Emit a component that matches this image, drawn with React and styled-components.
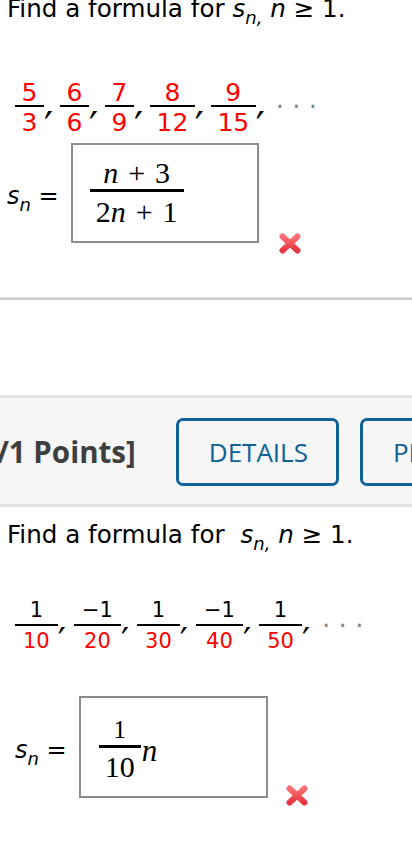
import React from "react";
import styled, { createGlobalStyle } from "styled-components";

const Global = createGlobalStyle`
  html, body { margin: 0; padding: 0; background: #fff; }
  body { font-family: "DejaVu Sans", Verdana, sans-serif; color: #000; }
`;

const Page = styled.div`
  width: 412px;
  overflow: hidden;
  padding-bottom: 30px;
`;

const Section = styled.section`
  padding-left: 7px;
`;

const Prompt = styled.p`
  margin: ${(p) => p.$mt}px 0 0;
  font-size: 24.6px;
  line-height: 28px;
  white-space: nowrap;
`;

const Var = styled.i`
  font-style: italic;
  margin-left: ${(p) => p.$ml || 0}px;
`;

const Sub = styled.span`
  font-style: italic;
  font-size: 18px;
  vertical-align: -7px;
  line-height: 0;
`;

const SeqRow = styled.div`
  display: flex;
  align-items: flex-start;
  padding-left: 8px;
  margin-top: ${(p) => p.$mt}px;
  white-space: nowrap;
`;

const Frac = styled.span`
  display: inline-flex;
  flex-direction: column;
  align-items: stretch;
  text-align: center;
`;

const Part = styled.span`
  display: block;
  color: ${(p) => p.$c};
  font-size: ${(p) => p.$fs}px;
  line-height: 1;
  padding: 0 ${(p) => p.$pad}px;
  margin-top: ${(p) => p.$mt || 0}px;
`;

const Bar = styled.span`
  display: block;
  height: ${(p) => p.$h}px;
  background: #000;
  margin-top: ${(p) => p.$mt || 0}px;
`;

const Comma = styled.span`
  font-size: ${(p) => p.$fs}px;
  line-height: ${(p) => p.$fs}px;
  height: ${(p) => p.$fs}px;
  margin: ${(p) => p.$mt}px ${(p) => p.$mr}px ${(p) => -p.$fs}px ${(p) => p.$ml}px;
`;

const Dots = styled.span`
  font-size: 26px;
  line-height: 26px;
  color: #888;
  margin-top: ${(p) => p.$mt}px;
  margin-left: ${(p) => p.$ml}px;
`;

const AnswerRow = styled.div`
  display: flex;
  align-items: center;
  padding-left: ${(p) => p.$pl}px;
  margin-top: ${(p) => p.$mt}px;
`;

const Label = styled.span`
  font-size: 24px;
  line-height: 28px;
  margin-top: 6px;
  margin-right: 12px;
  white-space: nowrap;
`;

const AnswerBox = styled.div`
  box-sizing: border-box;
  width: ${(p) => p.$w}px;
  height: ${(p) => p.$h}px;
  border: 2px solid #8c8c8c;
  display: flex;
  align-items: center;
  padding-left: ${(p) => p.$pl}px;
  font-family: "Liberation Serif", "Times New Roman", serif;
  flex-shrink: 0;
`;

const MathFrac = styled.span`
  display: inline-flex;
  flex-direction: column;
  align-items: stretch;
  text-align: center;
  margin-top: ${(p) => p.$mt || 0}px;
`;

const MathPart = styled.span`
  display: block;
  font-size: ${(p) => p.$fs}px;
  line-height: 1;
  padding: 0 6px;
  margin-top: ${(p) => p.$mt || 0}px;
  white-space: nowrap;
`;

const MathBar = styled.span`
  display: block;
  height: 3px;
  background: #000;
  margin-top: ${(p) => p.$mt || 0}px;
`;

const MI = styled.i`
  font-style: italic;
`;

const Op = styled.span`
  margin: 0 10px;
`;

const TrailingVar = styled.i`
  font-style: italic;
  font-size: 31px;
  line-height: 1;
  margin-top: ${(p) => p.$mt}px;
  margin-left: 1px;
`;

const Wrong = styled.span`
  display: flex;
  align-self: flex-end;
  margin-left: ${(p) => p.$ml}px;
  margin-bottom: ${(p) => p.$mb}px;
`;

const Separator = styled.div`
  margin-top: 54px;
  height: 2px;
  background: #cccccc;
  border-top: 1px solid #e6e6e6;
`;

const Band = styled.div`
  margin-top: 95px;
  display: flex;
  align-items: center;
  overflow: hidden;
  background: #f6f6f6;
  border-top: 3px solid #e2e2e2;
  border-bottom: 3px solid #e2e2e2;
  padding: 20px 0 18px;
  font-family: "Open Sans", "DejaVu Sans", sans-serif;
`;

const Points = styled.span`
  flex-shrink: 0;
  font-weight: 700;
  font-size: 29.5px;
  color: #3f3f3f;
  margin-left: -30px;
  margin-right: 40px;
  white-space: nowrap;
`;

const Button = styled.button`
  flex-shrink: 0;
  box-sizing: border-box;
  height: 68px;
  padding: 0 28px 0 30px;
  border: 3px solid #0f6198;
  border-radius: 7px;
  background: transparent;
  color: #0f6198;
  font-family: "Open Sans", "DejaVu Sans", sans-serif;
  font-size: 26px;
  font-weight: 500;
  line-height: 1;
  margin-right: 21px;
  white-space: nowrap;
`;

function XMark({ id }) {
  return (
    <svg width="24" height="23" viewBox="0 0 24 23">
      <defs>
        <linearGradient id={id} x1="0" y1="0" x2="0" y2="1">
          <stop offset="0" stopColor="#ff6f76" />
          <stop offset="1" stopColor="#e63540" />
        </linearGradient>
      </defs>
      <path
        d="M4.5 4.5 L19.5 18.5 M19.5 4.5 L4.5 18.5"
        stroke={`url(#${id})`}
        strokeWidth="6"
        strokeLinecap="round"
        fill="none"
      />
    </svg>
  );
}

const seq1 = [
  ["5", "3"],
  ["6", "6"],
  ["7", "9"],
  ["8", "12"],
  ["9", "15"],
];

const seq2 = [
  ["1", "10"],
  ["\u22121", "20"],
  ["1", "30"],
  ["\u22121", "40"],
  ["1", "50"],
];

export default function App() {
  return (
    <Page>
      <Global />
      <Section>
        <Prompt $mt={-5.35}>
          Find a formula for <Var>s</Var>
          <Sub>n,</Sub> <Var>n</Var> ≥ 1.
        </Prompt>
        <SeqRow $mt={57}>
          {seq1.map(([n, d], i) => (
            <React.Fragment key={i}>
              <Frac>
                <Part $c="#ff0000" $fs={25} $pad={6.5}>{n}</Part>
                <Bar $h={2} />
                <Part $c="#ff0000" $fs={25} $pad={6.5} $mt={3}>{d}</Part>
              </Frac>
              <Comma $fs={40} $mt={27} $ml={0} $mr={7}>′</Comma>
            </React.Fragment>
          ))}
          <Dots $mt={14} $ml={4}>· · ·</Dots>
        </SeqRow>
        <AnswerRow $pl={0} $mt={8.3}>
          <Label>
            <Var>s</Var>
            <Sub>n</Sub> =
          </Label>
          <AnswerBox $w={188} $h={100} $pl={17}>
            <MathFrac>
              <MathPart $fs={30}>
                <MI>n</MI>
                <Op>+</Op>3
              </MathPart>
              <MathBar $mt={1} />
              <MathPart $fs={30} $mt={5}>
                2<MI>n</MI>
                <Op>+</Op>1
              </MathPart>
            </MathFrac>
          </AnswerBox>
          <Wrong $ml={19} $mb={-12}>
            <XMark id="xg1" />
          </Wrong>
        </AnswerRow>
      </Section>
      <Separator />
      <Band>
        <Points>[0/1 Points]</Points>
        <Button>DETAILS</Button>
        <Button>PREVIOUS ANSWERS</Button>
      </Band>
      <Section>
        <Prompt $mt={13.6}>
          Find a formula for <Var $ml={8}>s</Var>
          <Sub>n,</Sub> <Var>n</Var> ≥ 1.
        </Prompt>
        <SeqRow $mt={51}>
          {seq2.map(([n, d], i) => (
            <React.Fragment key={i}>
              <Frac>
                <Part $c="#000" $fs={21} $pad={8}>{n}</Part>
                <Bar $h={2} $mt={3} />
                <Part $c="#ff0000" $fs={21} $pad={8} $mt={5.5}>{d}</Part>
              </Frac>
              <Comma $fs={36} $mt={23} $ml={0} $mr={8}>′</Comma>
            </React.Fragment>
          ))}
          <Dots $mt={13} $ml={4}>· · ·</Dots>
        </SeqRow>
        <AnswerRow $pl={8} $mt={43.8}>
          <Label>
            <Var>s</Var>
            <Sub>n</Sub> =
          </Label>
          <AnswerBox $w={189} $h={102} $pl={18}>
            <MathFrac $mt={5}>
              <MathPart $fs={25}>1</MathPart>
              <MathBar $mt={2.5} />
              <MathPart $fs={30} $mt={4}>10</MathPart>
            </MathFrac>
            <TrailingVar $mt={8}>n</TrailingVar>
          </AnswerBox>
          <Wrong $ml={17} $mb={-9}>
            <XMark id="xg2" />
          </Wrong>
        </AnswerRow>
      </Section>
    </Page>
  );
}
